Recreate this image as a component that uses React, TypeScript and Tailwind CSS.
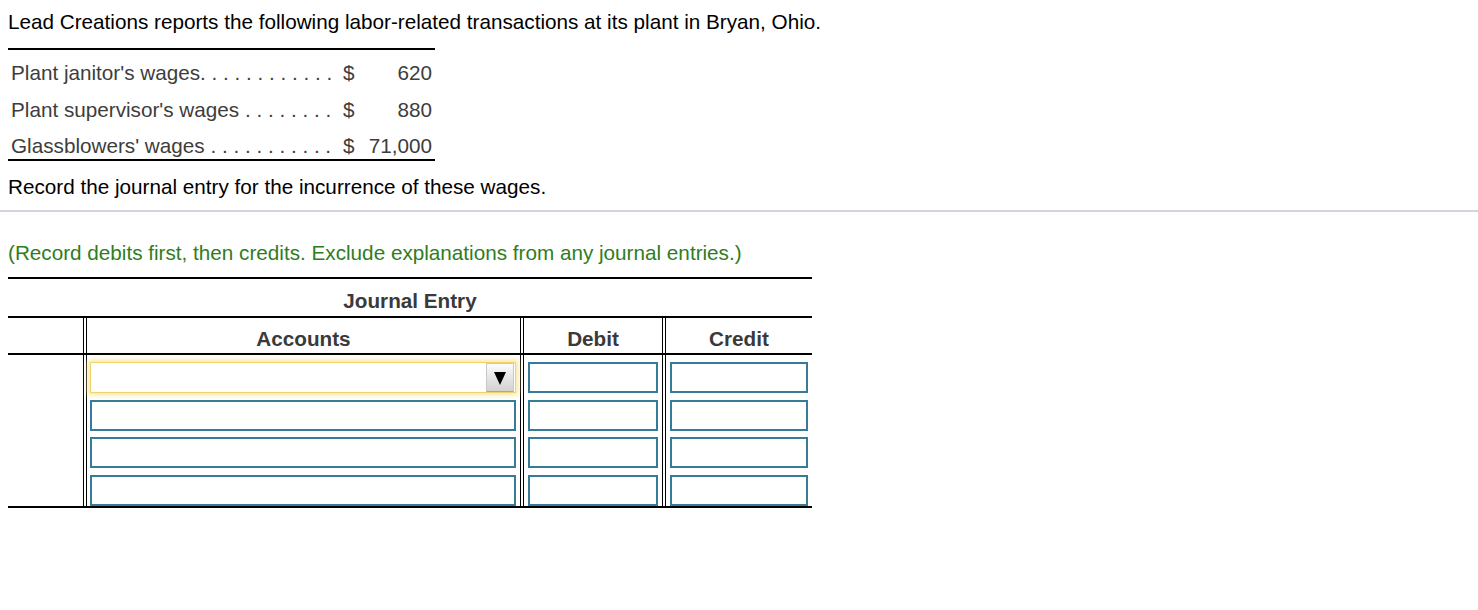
import { useState } from 'react'

const wages = [
  { label: "Plant janitor's wages", dots: '. . . . . . . . . . . .', amount: '620' },
  { label: "Plant supervisor's wages", dots: ' . . . . . . . .', amount: '880' },
  { label: "Glassblowers' wages", dots: ' . . . . . . . . . . .', amount: '71,000' },
]

function Sep() {
  return <div className="w-[4px] shrink-0 border-x border-black" />
}

function Box({ className = '' }: { className?: string }) {
  return <div className={`h-[31px] border-2 border-[#367b97] bg-white ${className}`} />
}

export default function App() {
  const [open, setOpen] = useState(false)

  return (
    <div className="min-h-screen bg-white font-['Liberation_Sans',Arial,sans-serif] text-[20.7px] text-black">
      <div className="px-2">
        <p className="h-[48px] pt-[10px] leading-[24px]">
          Lead Creations reports the following labor-related transactions at its plant in Bryan, Ohio.
        </p>

        <div className="w-[427px] border-y-2 border-black pt-[11px] text-[#3d3d3d]">
          {wages.map((w, i) => (
            <div
              key={w.label}
              className={`flex items-start px-[3px] leading-[24px] ${i < 2 ? 'h-[36.5px]' : 'h-[25px]'}`}
            >
              <div className="w-[332px] shrink-0 whitespace-pre">
                {w.label}
                {w.dots}
              </div>
              <span className="w-[12px] shrink-0">$</span>
              <span className="w-[77px] shrink-0 text-right">{w.amount}</span>
            </div>
          ))}
        </div>

        <p className="mt-[14px] leading-[24px]">Record the journal entry for the incurrence of these wages.</p>
      </div>

      <div className="mt-[11px] h-[2px] w-full bg-[#d4d4dc]" />

      <div className="px-2">
        <p className="mt-[29px] leading-[24px] text-[#2f7d20]">
          (Record debits first, then credits. Exclude explanations from any journal entries.)
        </p>

        <div className="mt-[12px] w-[804px] border-t-2 border-black text-[#3a3a3a]">
          <div className="h-[37px] pt-[10px] text-center font-bold leading-[24px]">Journal Entry</div>

          <div className="flex h-[39px] border-y-2 border-black font-bold leading-[24px]">
            <div className="w-[75px] shrink-0" />
            <Sep />
            <div className="w-[433px] shrink-0 pt-[9px] text-center">Accounts</div>
            <Sep />
            <div className="w-[138px] shrink-0 pt-[9px] text-center">Debit</div>
            <Sep />
            <div className="w-[146px] shrink-0 pt-[9px] text-center">Credit</div>
          </div>

          <div className="flex h-[153px] border-b-2 border-black">
            <div className="w-[75px] shrink-0" />
            <Sep />
            <div className="flex w-[433px] shrink-0 flex-col gap-[6.5px] pl-[3px] pt-[7px]">
              <button
                type="button"
                onClick={() => setOpen((v) => !v)}
                className="relative flex h-[31px] w-[426px] items-center justify-end border border-[#f0d46e] bg-white pr-[1px] shadow-[0_0_5px_2px_#f9e69c]"
              >
                <span className="flex h-[29px] w-[28px] items-center justify-center border border-[#c8c8c8] border-b-[#a8a8a8] bg-gradient-to-b from-[#fbfbfb] to-[#d2d2d2]">
                  <svg width="12" height="14" viewBox="0 0 12 14">
                    <polygon points="0,1 12,1 6,14" fill="#000" />
                  </svg>
                </span>
              </button>
              <Box className="w-[426px]" />
              <Box className="w-[426px]" />
              <Box className="w-[426px]" />
            </div>
            <Sep />
            <div className="flex w-[138px] shrink-0 flex-col gap-[6.5px] pl-[4px] pt-[7px]">
              {[0, 1, 2, 3].map((i) => (
                <Box key={i} className="w-[130px]" />
              ))}
            </div>
            <Sep />
            <div className="flex w-[146px] shrink-0 flex-col gap-[6.5px] pl-[4px] pt-[7px]">
              {[0, 1, 2, 3].map((i) => (
                <Box key={i} className="w-[138px]" />
              ))}
            </div>
          </div>
        </div>
      </div>
    </div>
  )
}
